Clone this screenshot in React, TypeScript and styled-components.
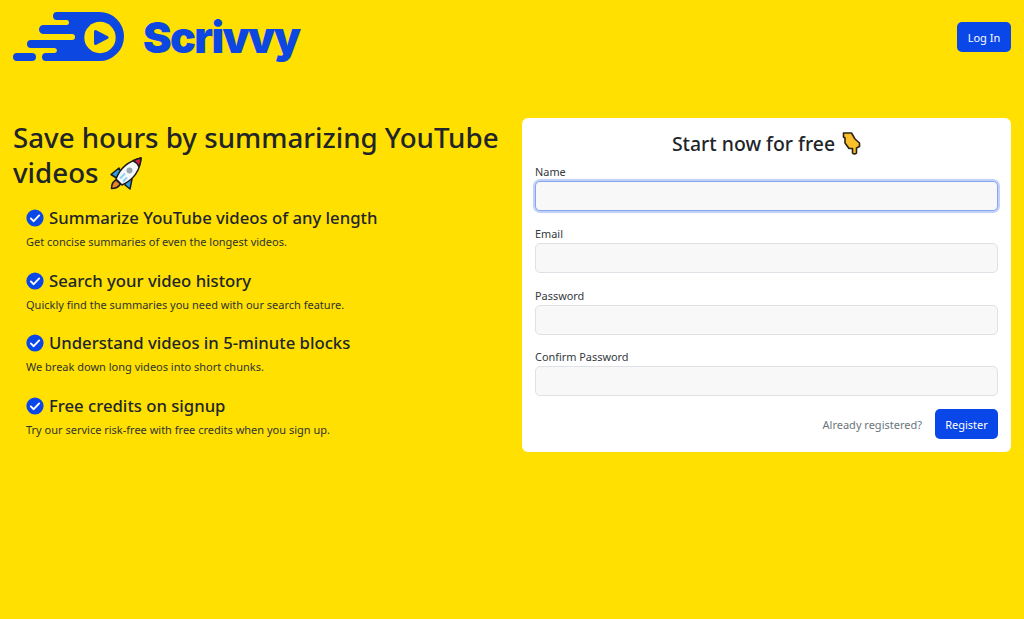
import { createGlobalStyle } from "styled-components";
import styled from "styled-components";

const GlobalStyle = createGlobalStyle`
  html, body {
    margin: 0;
    padding: 0;
    background: #ffe000;
    font-family: "Noto Sans", "Open Sans", sans-serif;
    color: #212529;
  }
  * { box-sizing: border-box; }
`;

const Page = styled.div`
  width: 1024px;
  height: 619px;
  background: #ffe000;
  padding: 0 13px;
  overflow: hidden;
`;

const Header = styled.header`
  height: 118px;
  display: flex;
  justify-content: space-between;
  align-items: flex-start;
`;

const Brand = styled.div`
  display: flex;
  align-items: flex-start;
  gap: 18px;
  padding-top: 12px;
`;

const BrandName = styled.span`
  font-family: "Inter", sans-serif;
  font-weight: 900;
  font-size: 43px;
  line-height: 50px;
  color: #0d47e1;
  letter-spacing: -1.6px;
`;

const PrimaryButton = styled.button<{ $width: number }>`
  width: ${(props) => props.$width}px;
  height: 30px;
  border: none;
  border-radius: 5px;
  background: #0a47e8;
  color: #fff;
  font-family: inherit;
  font-size: 11px;
  padding: 0;
`;

const LoginButton = styled(PrimaryButton)`
  margin-top: 22px;
`;

const Main = styled.main`
  display: flex;
  gap: 9px;
`;

const Pitch = styled.section`
  width: 500px;
`;

const Headline = styled.h1`
  margin: 0 0 15px;
  font-size: 27.7px;
  font-weight: 500;
  line-height: 35px;
  padding-top: 2px;
`;

const RocketIcon = styled.svg`
  vertical-align: middle;
  margin: -8px 0 -6px 1px;
`;

const FeatureList = styled.div`
  display: flex;
  flex-direction: column;
  gap: 16.5px;
  padding-left: 13px;
`;

const Feature = styled.div``;

const FeatureTitle = styled.h2`
  margin: 0;
  display: flex;
  align-items: center;
  gap: 5px;
  font-size: 16.7px;
  font-weight: 500;
  line-height: 26px;
`;

const FeatureText = styled.p`
  margin: 2px 0 0;
  font-size: 11px;
  line-height: 18px;
  color: #2f3330;
`;

const Card = styled.form`
  width: 489px;
  height: 334px;
  background: #fff;
  border-radius: 6px;
  padding: 13px;
`;

const CardTitle = styled.h3`
  margin: 0 0 6px;
  height: 26px;
  display: flex;
  justify-content: center;
  align-items: center;
  gap: 6px;
  font-size: 19.4px;
  font-weight: 500;
  line-height: 26px;
`;

const Field = styled.div`
  margin-bottom: 13.75px;
`;

const Label = styled.label`
  display: block;
  font-size: 10.9px;
  line-height: 18px;
  color: #33383d;
`;

const Input = styled.input<{ $focused?: boolean }>`
  display: block;
  width: 100%;
  height: 30px;
  background: #f8f8f8;
  border: 1px solid ${(props) => (props.$focused ? "#86a7f0" : "#dee2e6")};
  border-radius: 5px;
  outline: none;
  box-shadow: ${(props) =>
    props.$focused ? "0 0 0 2px rgba(13, 71, 225, 0.25)" : "none"};
`;

const Actions = styled.div`
  display: flex;
  justify-content: flex-end;
  align-items: center;
  gap: 13px;
  margin-top: -1px;
`;

const LoginLink = styled.a`
  font-size: 11px;
  color: #6c757d;
`;

const Check = () => (
  <svg width="18" height="18" viewBox="0 0 18 18" aria-hidden="true">
    <circle cx="9" cy="9" r="8.6" fill="#0a47e8" />
    <path
      d="M4.8 9.4l2.9 2.8 5.5-5.8"
      fill="none"
      stroke="#fff"
      strokeWidth="1.9"
      strokeLinecap="round"
      strokeLinejoin="round"
    />
  </svg>
);

const Logo = () => (
  <svg width="112" height="50" viewBox="0 0 112 50" aria-hidden="true">
    <path
      d="M44 0H86.500A24.500 24.500 0 0 1 86.500 49H33a4 4 0 0 1 0-8H41.500a2.500 2.500 0 0 0 0-5H18a4 4 0 0 1 0-8H59a3 3 0 0 0 0-6H30.500a4.500 4.500 0 0 1 0-9H53.500a2.500 2.500 0 0 0 0-5H44a4 4 0 0 1 0-8Z"
      fill="#0d47e1"
    />
    <rect x="0" y="41" width="23" height="8" rx="4" fill="#0d47e1" />
    <circle cx="87" cy="25.500" r="15.700" fill="#ffe000" />
    <path
      d="M81 19.500a1.500 1.500 0 0 1 2.300-1.300l11.500 6a1.500 1.500 0 0 1 0 2.600l-11.500 6a1.500 1.500 0 0 1-2.300-1.300Z"
      fill="#0d47e1"
    />
  </svg>
);

const Rocket = () => (
  <RocketIcon width="36" height="36" viewBox="0 0 36 36" aria-hidden="true">
    <g stroke="#1c1c1c" strokeWidth="1.5" strokeLinejoin="round">
      <path d="M9 23c-3 1.500-4.500 4.500-4.500 8.500 4 0 7-1.500 9-4.500Z" fill="#e8862a" />
      <path d="M12 11L4 17.500l5.500 3.500L15 17Z" fill="#2f9fe0" />
      <path d="M25 22l-2 10-5-4 1-6Z" fill="#2f9fe0" />
      <path d="M9 22C13 11 22 4 34 1c-1 13-8 22-19 27Z" fill="#f6f8fa" />
      <path d="M26 3.800c2.500 1 4.500 3 6 6 1.200-2.800 1.800-5.800 2-8.800-2.800.6-5.400 1.600-8 2.800Z" fill="#d9213f" />
    </g>
    <circle cx="22.500" cy="13.500" r="3" fill="#9aa7b0" />
    <path d="M13 21.500l5-5M16 24.500l4-4" stroke="#8fd0ef" strokeWidth="2" />
  </RocketIcon>
);

const PointDown = () => (
  <svg width="20" height="24" viewBox="0 0 20 24" aria-hidden="true">
    <path
      d="M2.500 1H10.500L14 7l4.500 4v3.500L15.500 16v4.500c0 1.800-4 1.800-4 0V16.500H8L4 11V6L2.500 5Z"
      fill="#fbbf2c"
      stroke="#2b2416"
      strokeWidth="1.600"
      strokeLinejoin="round"
    />
  </svg>
);

const features = [
  {
    title: "Summarize YouTube videos of any length",
    text: "Get concise summaries of even the longest videos.",
  },
  {
    title: "Search your video history",
    text: "Quickly find the summaries you need with our search feature.",
  },
  {
    title: "Understand videos in 5-minute blocks",
    text: "We break down long videos into short chunks.",
  },
  {
    title: "Free credits on signup",
    text: "Try our service risk-free with free credits when you sign up.",
  },
];

const fields = ["Name", "Email", "Password", "Confirm Password"];

const App = () => {
  return (
    <Page>
      <GlobalStyle />
      <Header>
        <Brand>
          <Logo />
          <BrandName>Scrivvy</BrandName>
        </Brand>
        <LoginButton $width={54}>Log In</LoginButton>
      </Header>
      <Main>
        <Pitch>
          <Headline>
            Save hours by summarizing YouTube videos <Rocket />
          </Headline>
          <FeatureList>
            {features.map((feature) => (
              <Feature key={feature.title}>
                <FeatureTitle>
                  <Check />
                  {feature.title}
                </FeatureTitle>
                <FeatureText>{feature.text}</FeatureText>
              </Feature>
            ))}
          </FeatureList>
        </Pitch>
        <Card onSubmit={(e) => e.preventDefault()}>
          <CardTitle>
            Start now for free <PointDown />
          </CardTitle>
          {fields.map((name, i) => (
            <Field key={name}>
              <Label>{name}</Label>
              <Input $focused={i === 0} />
            </Field>
          ))}
          <Actions>
            <LoginLink>Already registered?</LoginLink>
            <PrimaryButton $width={63}>Register</PrimaryButton>
          </Actions>
        </Card>
      </Main>
    </Page>
  );
};

export default App;
